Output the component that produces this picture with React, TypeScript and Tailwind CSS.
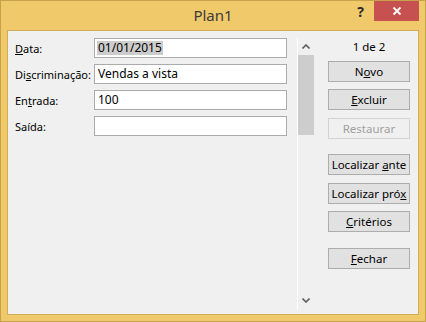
import React from "react";

const font = { fontFamily: '"Noto Sans", "Open Sans", sans-serif' };

function Btn({ children, disabled, className = "" }: { children: React.ReactNode; disabled?: boolean; className?: string }) {
  return (
    <div
      className={
        "flex h-[21px] w-[82px] items-center justify-center border text-[11.5px] leading-none " +
        (disabled
          ? "border-[#d3d3d3] bg-[#f0f0f0] text-[#a0a0a0] "
          : "border-[#adadad] bg-[#e1e1e1] text-black ") +
        className
      }
    >
      <span>{children}</span>
    </div>
  );
}

function Row({ label, value, selected }: { label: React.ReactNode; value?: string; selected?: boolean }) {
  return (
    <div className="mb-[6px] flex h-[20px] items-center">
      <div className="w-[79px] whitespace-nowrap text-[11px] leading-none text-black">{label}</div>
      <div className="flex h-[20px] w-[193px] items-center border border-[#ababab] bg-white pl-[2px] text-[12px] leading-none text-black">
        {value ? (
          <span className={selected ? "bg-[#cccccc] px-[1px] py-[1px]" : "px-[1px]"}>{value}</span>
        ) : null}
      </div>
    </div>
  );
}

export default function App() {
  return (
    <div style={font} className="h-[322px] w-[426px] overflow-hidden">
      <div className="flex h-[322px] w-[426px] flex-col border border-[#c6a24c] bg-[#f0c96a]">
        {/* Title bar */}
        <div className="relative flex h-[29px] items-start">
          <div className="absolute left-0 right-0 top-[4px] text-center text-[15px] leading-[20px] text-[#3c3c3c]">Plan1</div>
          <div className="ml-auto flex items-start">
            <div className="mt-[3px] mr-[10px] text-[14px] font-bold leading-[16px] text-[#2a2a2a]">?</div>
            <div className="flex h-[20px] w-[45px] items-center justify-center bg-[#c75050]">
              <svg width="10" height="10" viewBox="0 0 10 10">
                <path d="M1.5 1.5 L8.5 8.5 M8.5 1.5 L1.5 8.5" stroke="white" strokeWidth="1.8" />
              </svg>
            </div>
            <div className="w-[6px]" />
          </div>
        </div>
        {/* Content */}
        <div className="ml-[6px] flex h-[285px] w-[412px] border border-[#d2ac55] bg-[#f0f0f0] pt-[7px]">
          {/* Form */}
          <div className="pl-[7px]">
            <Row label={<><u>D</u>ata:</>} value="01/01/2015" selected />
            <Row label={<>Di<u>s</u>criminação:</>} value="Vendas a vista" />
            <Row label={<>En<u>t</u>rada:</>} value="100" />
            <Row label={<>Saída:</>} />
          </div>
          {/* Scrollbar */}
          <div className="ml-[10px] flex h-[271px] w-[17px] flex-col border-l border-white">
            <div className="flex h-[17px] items-center justify-center">
              <svg width="8" height="5" viewBox="0 0 8 5">
                <path d="M0.5 4.5 L4 1 L7.5 4.5" stroke="#606060" strokeWidth="1.6" fill="none" />
              </svg>
            </div>
            <div className="h-[80px] w-[16px] bg-[#cdcdcd]" />
            <div className="flex-1" />
            <div className="flex h-[17px] items-center justify-center">
              <svg width="8" height="5" viewBox="0 0 8 5">
                <path d="M0.5 0.5 L4 4 L7.5 0.5" stroke="#606060" strokeWidth="1.6" fill="none" />
              </svg>
            </div>
          </div>
          {/* Buttons */}
          <div className="ml-[14px] flex flex-col">
            <div className="flex h-[17px] w-[82px] items-center justify-center text-[11.5px] leading-none text-black">1 de 2</div>
            <Btn className="mt-[6px]">N<u>o</u>vo</Btn>
            <Btn className="mt-[7px]"><u>E</u>xcluir</Btn>
            <Btn className="mt-[8px]" disabled>Restaurar</Btn>
            <Btn className="mt-[15px]">Localizar <u>a</u>nte</Btn>
            <Btn className="mt-[8px]">Localizar pró<u>x</u></Btn>
            <Btn className="mt-[7px]"><u>C</u>ritérios</Btn>
            <Btn className="mt-[16px]"><u>F</u>echar</Btn>
          </div>
        </div>
      </div>
    </div>
  );
}
